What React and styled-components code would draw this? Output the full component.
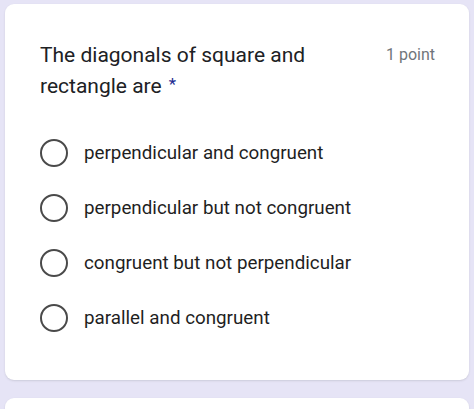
import React from "react";
import styled, { createGlobalStyle } from "styled-components";

const GlobalStyle = createGlobalStyle`
  html, body {
    margin: 0;
    padding: 0;
    background: #e6e4f6;
  }
  body {
    font-family: Roboto, "Liberation Sans", sans-serif;
  }
`;

const Page = styled.div`
  width: 474px;
  height: 409px;
  overflow: hidden;
  padding: 4px 5px 0 5px;
  box-sizing: border-box;
  display: flex;
  flex-direction: column;
  gap: 18px;
`;

const Card = styled.div`
  background: #fff;
  border-radius: 9px;
  box-shadow: 0 1px 2px rgba(60, 64, 67, 0.15);
  flex-shrink: 0;
  height: ${p => p.$height}px;
  padding: ${p => (p.$empty ? "0" : "36px 34px 0 35px")};
  box-sizing: border-box;
`;

const Header = styled.div`
  display: flex;
  justify-content: space-between;
  align-items: flex-start;
`;

const Title = styled.div`
  font-size: 21px;
  line-height: 31px;
  color: #202124;
  width: 300px;
`;

const Required = styled.span`
  color: #1c2b8f;
  font-size: 17px;
  margin-left: 7px;
  position: relative;
  top: -3px;
`;

const Points = styled.div`
  font-size: 16px;
  line-height: 20px;
  color: #70757a;
  margin-top: 5px;
`;

const Options = styled.div`
  display: flex;
  flex-direction: column;
  gap: 27px;
  margin-top: 36px;
`;

const Option = styled.label`
  display: flex;
  align-items: center;
  gap: 16px;
`;

const Radio = styled.span`
  width: 28px;
  height: 28px;
  border: 2.5px solid #4a4a4a;
  border-radius: 50%;
  box-sizing: border-box;
  flex-shrink: 0;
`;

const OptionText = styled.span`
  font-size: 18.8px;
  line-height: 28px;
  color: #1f1f1f;
`;

const options = [
  "perpendicular and congruent",
  "perpendicular but not congruent",
  "congruent but not perpendicular",
  "parallel and congruent",
];

export default function App() {
  return (
    <>
      <GlobalStyle />
      <Page>
        <Card $height={376}>
          <Header>
            <Title>
              The diagonals of square and rectangle are
              <Required>*</Required>
            </Title>
            <Points>1 point</Points>
          </Header>
          <Options>
            {options.map(o => (
              <Option key={o}>
                <Radio />
                <OptionText>{o}</OptionText>
              </Option>
            ))}
          </Options>
        </Card>
        <Card $height={40} $empty />
      </Page>
    </>
  );
}
